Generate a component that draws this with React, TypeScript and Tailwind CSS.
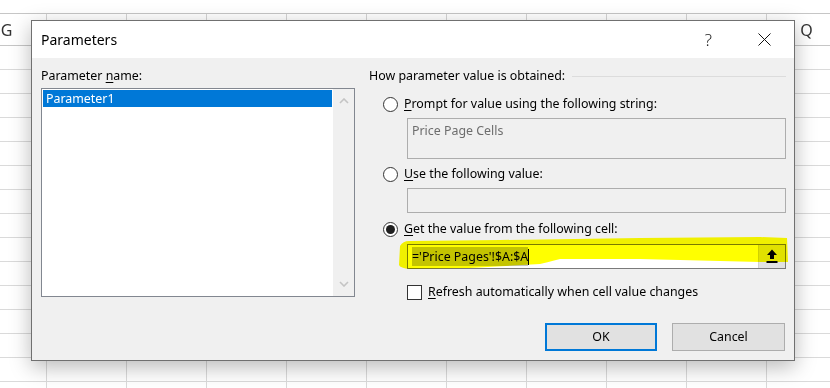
import React from "react";

function Radio({ checked }: { checked?: boolean }) {
  return (
    <div className="w-[15px] h-[15px] rounded-full border border-[#333333] bg-white flex items-center justify-center shrink-0">
      {checked && <div className="w-[9px] h-[9px] rounded-full bg-[#1f1f1f]" />}
    </div>
  );
}

export default function App() {
  const cols = ["G", "H", "I", "J", "K", "L", "M", "N", "O", "P", "Q"];
  const shown: Record<string, boolean> = { G: true, Q: true };
  const rows = Array.from({ length: 15 });
  return (
    <div className="relative w-[830px] h-[388px] overflow-hidden bg-white font-['Noto_Sans',sans-serif] text-[12.4px] text-black">
      {/* spreadsheet background */}
      <div className="pt-[13px]">
        <div className="flex ml-[-33px] h-[33px] border-t border-b border-[#c6c6c6]">
          {cols.map((c) => (
            <div
              key={c}
              className="w-[80px] shrink-0 border-r border-[#d4d4d4] flex items-center justify-center text-[16px] text-[#333333]"
            >
              {shown[c] ? c : null}
            </div>
          ))}
        </div>
        {rows.map((_, i) => (
          <div key={i} className="flex ml-[-33px] h-[24px] border-b border-[#dadada]">
            {cols.map((c) => (
              <div key={c} className="w-[80px] shrink-0 border-r border-[#dadada]" />
            ))}
          </div>
        ))}
      </div>

      {/* dialog window */}
      <div className="absolute left-[31px] top-[20px] w-[764px] h-[341px] border border-[#707070] bg-[#f0f0f0] shadow-[0_6px_20px_rgba(0,0,0,0.28)] flex flex-col">
        <div className="h-[37px] bg-white flex items-center pl-[9px] pr-[23px] shrink-0">
          <div className="text-[14px] text-black flex-1">Parameters</div>
          <div className="text-[17px] font-light text-[#222] leading-none">?</div>
          <svg className="ml-[46px]" width="13" height="13" viewBox="0 0 13 13">
            <path d="M0.5 0.5 L12.5 12.5 M12.5 0.5 L0.5 12.5" stroke="#111" strokeWidth="1" />
          </svg>
        </div>

        <div className="flex-1 flex flex-col pt-[10px] pl-[9px] pr-[8px]">
          <div className="flex gap-[14px]">
            {/* left column */}
            <div className="w-[314px] flex flex-col">
              <div className="h-[16px] leading-[16px]">
                Parameter <span className="underline underline-offset-2">n</span>ame:
              </div>
              <div className="mt-[4px] h-[209px] border border-[#828790] bg-white flex">
                <div className="flex-1 p-px">
                  <div className="h-[17px] bg-[#0078d7] text-white pl-[3px] leading-[17px]">Parameter1</div>
                </div>
                <div className="w-[21px] bg-[#f0f0f0] flex flex-col items-center justify-between py-[9px]">
                  <svg width="10" height="6" viewBox="0 0 10 6">
                    <path d="M1 5 L5 1 L9 5" fill="none" stroke="#c4c4c4" strokeWidth="1.6" />
                  </svg>
                  <svg width="10" height="6" viewBox="0 0 10 6">
                    <path d="M1 1 L5 5 L9 1" fill="none" stroke="#c4c4c4" strokeWidth="1.6" />
                  </svg>
                </div>
              </div>
            </div>

            {/* right column */}
            <div className="w-[417px] flex flex-col">
              <div className="h-[16px] flex items-center">
                <span className="leading-[16px]">How parameter value is obtained:</span>
                <div className="flex-1 h-px bg-[#dcdcdc] ml-[7px]" />
              </div>

              <div className="mt-[12px] h-[16px] flex items-center pl-[14px] gap-[6px]">
                <Radio />
                <span className="leading-[16px]">
                  <span className="underline underline-offset-2">P</span>rompt for value using the following string:
                </span>
              </div>
              <div className="mt-[6px] ml-[38px] w-[379px] h-[41px] border border-[#adadad] bg-[#f0f0f0] pl-[4px] pt-[4px] text-[#6d6d6d] leading-[16px]">
                Price Page Cells
              </div>

              <div className="mt-[7px] h-[16px] flex items-center pl-[14px] gap-[6px]">
                <Radio />
                <span className="leading-[16px]">
                  <span className="underline underline-offset-2">U</span>se the following value:
                </span>
              </div>
              <div className="mt-[6px] ml-[38px] w-[379px] h-[25px] border border-[#adadad] bg-[#f0f0f0]" />

              <div className="mt-[8px] h-[16px] flex items-center pl-[14px] gap-[6px]">
                <Radio checked />
                <span className="leading-[16px]">
                  <span className="underline underline-offset-2">G</span>et the value from the following cell:
                </span>
              </div>
              <div className="mt-[7px] ml-[38px] w-[379px] h-[25px] border border-[#7a7a7a] bg-white flex">
                <div className="flex-1 flex items-center pl-[4px]">
                  <span className="bg-[#c4c4c4] leading-[19px] h-[19px]">='Price Pages'!$A:$A</span>
                  <div className="w-px h-[16px] bg-black" />
                </div>
                <div className="w-[27px] bg-[#e1e1e1] border-l border-[#d0d0d0] flex items-center justify-center">
                  <svg width="12" height="15" viewBox="0 0 12 15">
                    <path d="M6 0.5 L11 6 L8 6 L8 10 L4 10 L4 6 L1 6 Z" fill="#000" />
                    <rect x="0.5" y="12" width="11" height="2" fill="#000" />
                  </svg>
                </div>
              </div>

              <div className="mt-[15px] h-[16px] flex items-center ml-[38px] gap-[6px]">
                <div className="w-[15px] h-[15px] border border-[#333333] bg-white shrink-0" />
                <span className="leading-[16px]">
                  <span className="underline underline-offset-2">R</span>efresh automatically when cell value changes
                </span>
              </div>
            </div>
          </div>

          <div className="mt-[23px] flex justify-end gap-[15px] pr-[1px]">
            <button className="w-[112px] h-[28px] bg-[#e1e1e1] border-2 border-[#0078d7] text-[12.4px] flex items-center justify-center">
              OK
            </button>
            <button className="w-[113px] h-[28px] bg-[#e1e1e1] border border-[#adadad] text-[12.4px] flex items-center justify-center">
              Cancel
            </button>
          </div>
        </div>
      </div>

      {/* yellow highlighter mark */}
      <svg
        className="absolute left-[395px] top-[234px] mix-blend-multiply pointer-events-none"
        width="400"
        height="40"
        viewBox="0 0 400 40"
      >
        <path
          d="M5 12 Q8 7 14 7 L105 6 L245 4 L365 3 L392 4 L393 28 L365 28 L245 25 L165 25 Q150 29 145 30 L75 34 L15 35 Q5 34 4 31 Z"
          fill="#ffff00"
        />
      </svg>
    </div>
  );
}
